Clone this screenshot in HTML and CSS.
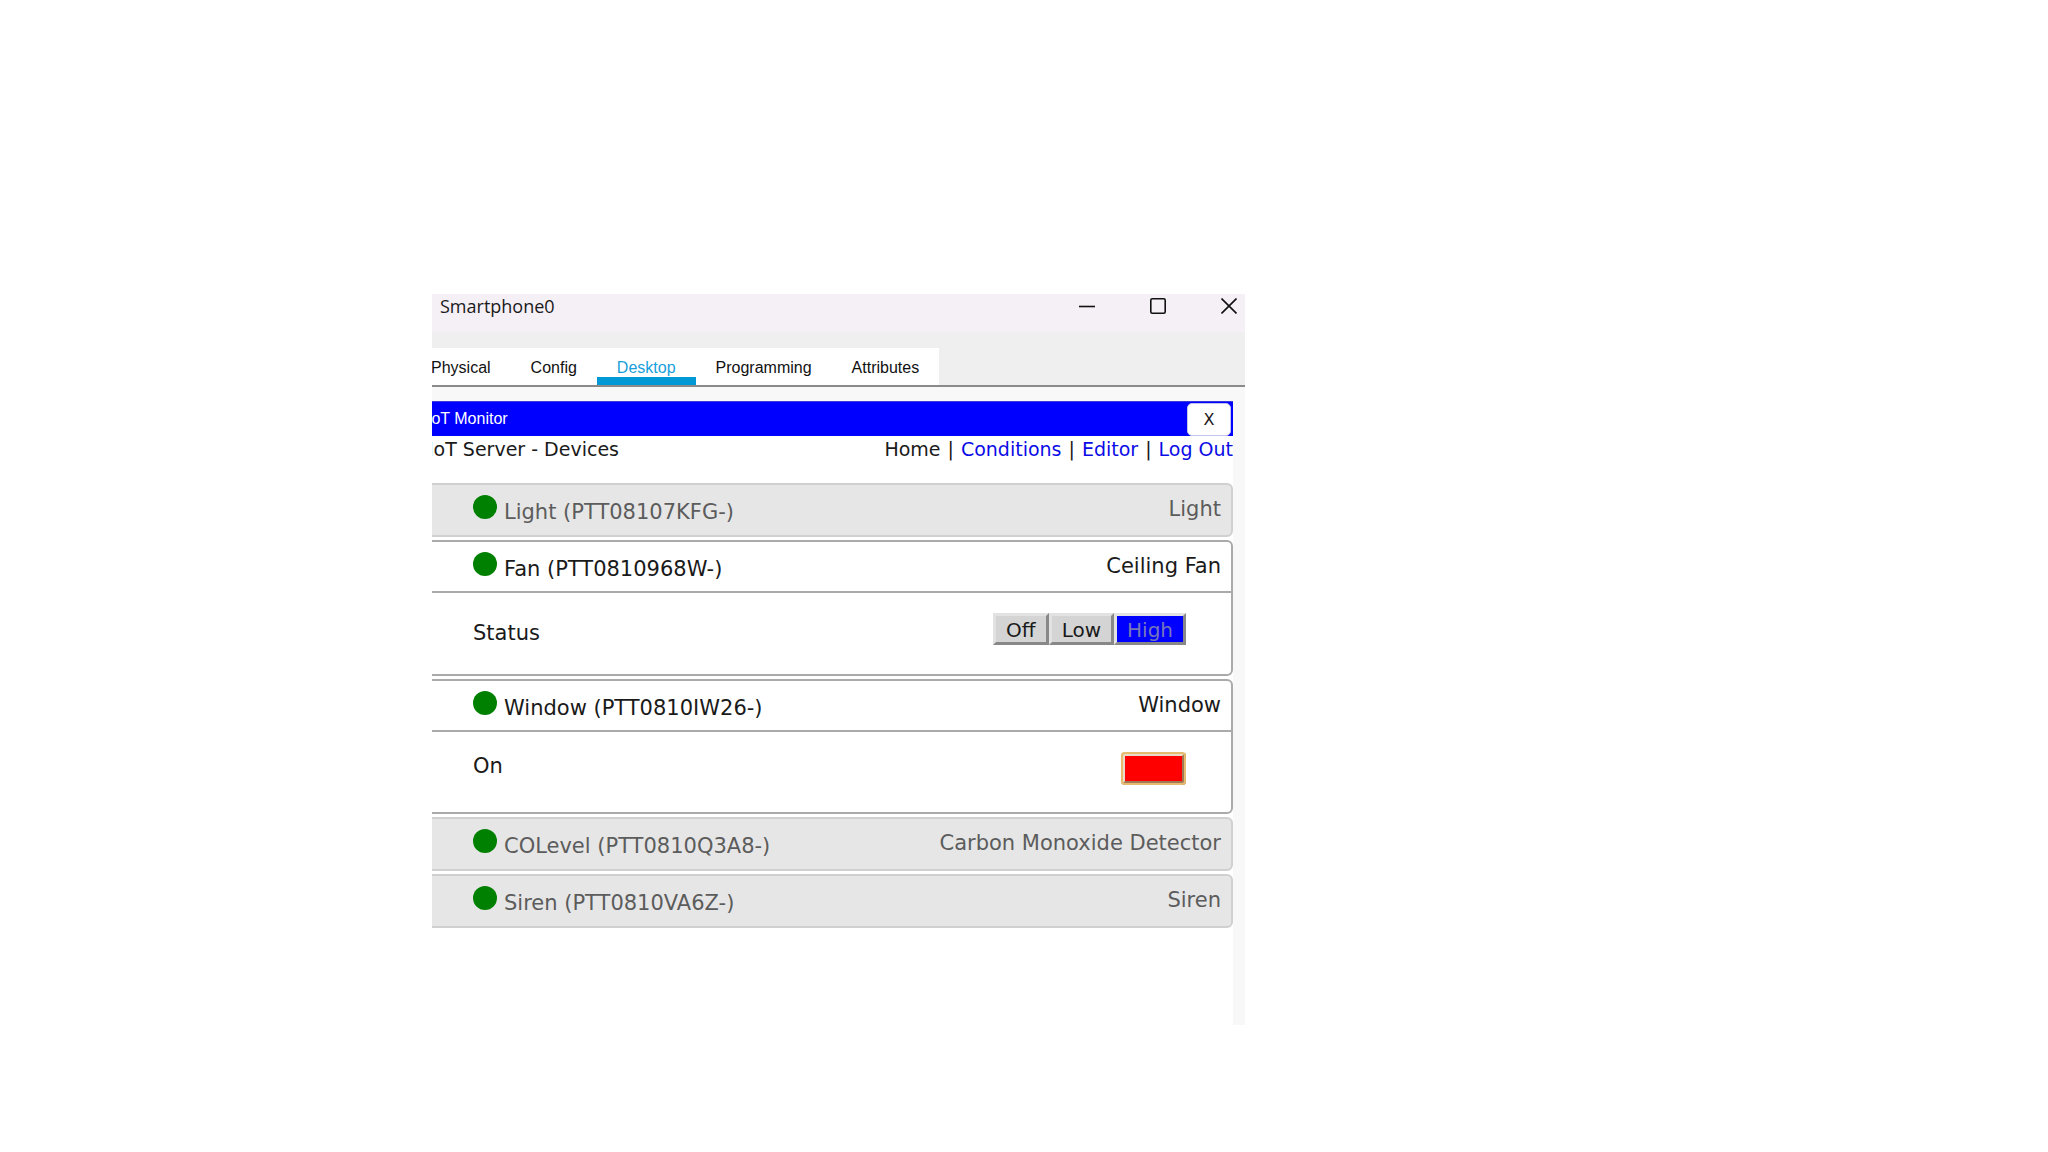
FILE: index.html
```html
<!DOCTYPE html>
<html lang="en">
<head>
<meta charset="utf-8">
<title>Smartphone0</title>
<link rel="stylesheet" href="styles.css">
</head>
<body>
<main class="window">
  <header class="titlebar">
    <h1 class="title">Smartphone0</h1>
    <div class="controls">
      <button class="control" aria-label="Minimize"><svg width="16" height="16" viewBox="0 0 16 16"><path d="M0 8.5H16"/></svg></button>
      <button class="control" aria-label="Maximize"><svg width="16" height="16" viewBox="0 0 16 16"><rect x=".8" y=".8" width="14.4" height="14.4" rx="1.5"/></svg></button>
      <button class="control" aria-label="Close"><svg width="16" height="16" viewBox="0 0 16 16"><path d="M.5 .5L15.5 15.5M15.5 .5L.5 15.5"/></svg></button>
    </div>
  </header>
  <nav class="tabs">
    <button class="tab">Physical</button>
    <button class="tab">Config</button>
    <button class="tab active">Desktop</button>
    <button class="tab">Programming</button>
    <button class="tab">Attributes</button>
  </nav>
  <section class="app">
    <div class="appbar">
      <h2 class="appname">IoT Monitor</h2>
      <button class="close">X</button>
    </div>
    <div class="page">
      <div class="pagehead">
        <h3 class="pagetitle">IoT Server - Devices</h3>
        <div class="menu"><span>Home</span><span>|</span><a href="#">Conditions</a><span>|</span><a href="#">Editor</a><span>|</span><a href="#">Log Out</a></div>
      </div>
      <div class="devices">
        <article class="device closed">
          <div class="head"><span class="dot"></span><span class="name">Light (PTT08107KFG-)</span><span class="kind">Light</span></div>
        </article>
        <article class="device">
          <div class="head"><span class="dot"></span><span class="name">Fan (PTT0810968W-)</span><span class="kind">Ceiling Fan</span></div>
          <div class="detail fan">
            <span>Status</span>
            <div class="speeds"><button class="speed">Off</button><button class="speed">Low</button><button class="speed selected">High</button></div>
          </div>
        </article>
        <article class="device">
          <div class="head"><span class="dot"></span><span class="name">Window (PTT0810IW26-)</span><span class="kind">Window</span></div>
          <div class="detail opening">
            <span>On</span>
            <button class="toggle" aria-label="On"></button>
          </div>
        </article>
        <article class="device closed">
          <div class="head"><span class="dot"></span><span class="name">COLevel (PTT0810Q3A8-)</span><span class="kind">Carbon Monoxide Detector</span></div>
        </article>
        <article class="device closed">
          <div class="head"><span class="dot"></span><span class="name">Siren (PTT0810VA6Z-)</span><span class="kind">Siren</span></div>
        </article>
      </div>
    </div>
  </section>
</main>
</body>
</html>
```
FILE: styles.css
```css
* { box-sizing: border-box; }
body {
  margin: 0;
  padding-top: 294px;
  background: #fff;
  display: grid;
  grid-template-columns: 432fr 813fr 803fr;
  font-family: Verdana, "DejaVu Sans", sans-serif;
  color: #1a1a1a;
}
h1, h2, h3 { margin: 0; font-weight: normal; }
button { margin: 0; padding: 0; border: 0; background: none; font: inherit; color: inherit; }
a { color: #0b0be6; text-decoration: none; }

.window { grid-column: 2; min-width: 0; overflow: hidden; background: #f8f8f8; }

.titlebar {
  display: flex;
  justify-content: space-between;
  align-items: flex-start;
  height: 38px;
  padding: 0 8px;
  background: #f5eff6;
}
.title { font: 18px/25px "Open Sans", sans-serif; }
.controls { display: flex; gap: 55px; padding-top: 4px; }
.control { width: 16px; height: 16px; }
.control svg { display: block; fill: none; stroke: #111; stroke-width: 1.6; }

.tabs {
  display: flex;
  padding-top: 16px;
  background: #efefef;
  border-bottom: 2px solid #8a8a8a;
}
.tab {
  height: 37px;
  padding: 10px 20px 0;
  background: #fff;
  border-bottom: 8px solid #fff;
  font: 16px/18px "Liberation Sans", Arial, sans-serif;
  color: #111;
}
.tab:first-child { margin-left: -21px; }
.tab.active { color: #189fdb; border-color: #0099d6; }

.app { margin: 14px 12px 0 -20px; }
.appbar {
  display: flex;
  justify-content: space-between;
  align-items: center;
  height: 35px;
  padding: 0 2px 0 15px;
  background: #00f;
  border-top: 1px solid #3a3ae0;
}
.appname { font: 16px/24px "Liberation Sans", Arial, sans-serif; color: #fff; }
.close {
  width: 44px;
  height: 33px;
  background: #fff;
  border: 1px solid #c4c4ee;
  border-radius: 5px;
  font-size: 16px;
}

.page { min-height: 589px; background: #fff; }
.pagehead {
  display: flex;
  justify-content: space-between;
  height: 47px;
  padding-left: 16px;
  font-size: 19px;
  line-height: 26px;
}
.pagetitle { font: inherit; }
.menu { display: flex; gap: 7px; }

.devices { display: grid; gap: 3px; font-size: 21px; }
.device { border: 2px solid #aaa; border-radius: 6px; }
.device.closed { background: #e6e6e6; border-color: #d0d0d0; color: #5c5c5c; }
.head {
  display: flex;
  align-items: flex-start;
  height: 49px;
  padding: 10px 10px 0 59px;
  line-height: 24px;
}
.closed .head { height: 50px; }
.dot { width: 24px; height: 24px; border-radius: 50%; background: #008000; }
.name { padding: 5px 0 0 7px; }
.kind { margin-left: auto; padding-top: 2px; }
.detail {
  display: flex;
  justify-content: space-between;
  align-items: flex-start;
  border-top: 2px solid #aaa;
  padding: 20px 45px 0 59px;
  line-height: 24px;
}
.fan { height: 83px; }
.opening { height: 82px; }
.fan > span { padding-top: 8px; }
.opening > span { padding-top: 2px; }
.speeds { display: flex; }
.speed {
  height: 32px;
  padding: 0 10px;
  background: #d4d4d4;
  border: 3px solid;
  border-color: #e2e2e2 #888 #888 #e2e2e2;
  font-size: 20px;
  line-height: 28px;
  overflow: hidden;
}
.selected { background: #00f; color: #7777b8; }
.toggle {
  width: 65px;
  height: 33px;
  background: #f00;
  border: 4px solid;
  border-color: #eadcc8 #a07858 #a07858 #eadcc8;
  outline: 2px solid #e6bb70;
  outline-offset: -2px;
  border-radius: 4px;
}
```
